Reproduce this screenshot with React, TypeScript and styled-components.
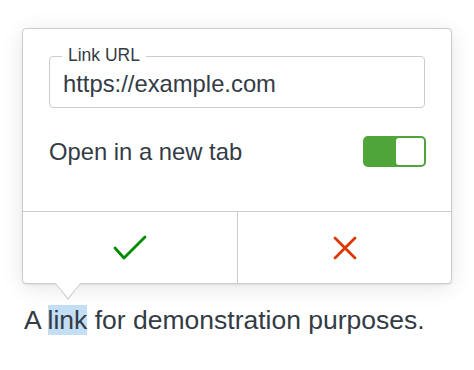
import styled, { createGlobalStyle } from 'styled-components'

const GlobalStyle = createGlobalStyle`
  body {
    margin: 0;
    background: #fff;
    font-family: "Liberation Sans", Arial, sans-serif;
    color: #333b45;
  }
`

const Page = styled.div`
  padding: 28px 0 0 22px;
`

const Balloon = styled.div`
  position: relative;
  box-sizing: border-box;
  width: 430px;
  height: 256px;
  display: flex;
  flex-direction: column;
  background: #fff;
  border: 1px solid #c9ccd1;
  border-radius: 4px;
  box-shadow: 0 1px 2px rgba(0, 0, 0, 0.08), 0 4px 22px rgba(0, 0, 0, 0.1);

  /* arrow pointing down to the link */
  &::before,
  &::after {
    content: '';
    position: absolute;
    left: 32px;
    border-style: solid;
    border-color: transparent;
  }
  &::before {
    bottom: -17px;
    border-width: 17px 13px 0 13px;
    border-top-color: #c9ccd1;
  }
  &::after {
    bottom: -15px;
    border-width: 16px 13px 0 13px;
    border-top-color: #fff;
  }
`

const Form = styled.div`
  padding: 27px 26px 0;
  flex: 1;
`

const Field = styled.fieldset`
  position: relative;
  box-sizing: border-box;
  margin: 0;
  height: 52px;
  border: 1px solid #c9ccd1;
  border-radius: 4px;
  padding: 0 13px;
  display: flex;
  align-items: center;
`

const FieldLabel = styled.label`
  position: absolute;
  top: -12px;
  left: 12px;
  padding: 0 6px;
  background: #fff;
  font-size: 17.5px;
  line-height: 20px;
  color: #333b45;
`

const UrlValue = styled.div`
  padding-top: 3px;
  font-size: 23.8px;
  color: #333b45;
`

const SwitchRow = styled.div`
  margin-top: 28px;
  height: 31px;
  display: flex;
  align-items: center;
  justify-content: space-between;
`

const SwitchLabel = styled.span`
  font-size: 23.8px;
  color: #333b45;
`

const Switch = styled.div<{ on: boolean }>`
  box-sizing: border-box;
  width: 63px;
  height: 31px;
  margin-right: -1px;
  padding: 2px;
  border-radius: 5px;
  background: ${p => (p.on ? '#4fa43a' : '#c4c4c4')};
  display: flex;
  justify-content: ${p => (p.on ? 'flex-end' : 'flex-start')};
`

const Thumb = styled.span`
  width: 28px;
  height: 27px;
  border-radius: 3px;
  background: #fff;
`

const Actions = styled.div`
  display: grid;
  grid-template-columns: 1fr 1fr;
  height: 71px;
  border-top: 1px solid #c9ccd1;
`

const ActionButton = styled.button<{ divided?: boolean }>`
  border: none;
  border-left: ${p => (p.divided ? '1px solid #c9ccd1' : 'none')};
  background: transparent;
  padding: 0;
  display: flex;
  align-items: center;
  justify-content: center;
  cursor: pointer;
`

const Paragraph = styled.p`
  margin: 21px 0 0 2px;
  font-size: 26.5px;
  line-height: 30px;
  color: #333b45;
`

const Mark = styled.span`
  background: #c3def5;
`

function CheckIcon() {
  return (
    <svg width="34" height="26" viewBox="0 0 34 26">
      <polyline
        points="2,13 11,23 32,2"
        fill="none"
        stroke="#008a00"
        strokeWidth="2.8"
        strokeLinecap="round"
        strokeLinejoin="round"
      />
    </svg>
  )
}

function CancelIcon() {
  return (
    <svg width="26" height="26" viewBox="0 0 26 26">
      <path
        d="M3 3 L23 23 M23 3 L3 23"
        fill="none"
        stroke="#db3700"
        strokeWidth="2.8"
        strokeLinecap="round"
      />
    </svg>
  )
}

export default function App() {
  return (
    <>
      <GlobalStyle />
      <Page>
        <Balloon>
          <Form>
            <Field>
              <FieldLabel>Link URL</FieldLabel>
              <UrlValue>https://example.com</UrlValue>
            </Field>
            <SwitchRow>
              <SwitchLabel>Open in a new tab</SwitchLabel>
              <Switch on={true}>
                <Thumb />
              </Switch>
            </SwitchRow>
          </Form>
          <Actions>
            <ActionButton aria-label="Save">
              <CheckIcon />
            </ActionButton>
            <ActionButton divided aria-label="Cancel">
              <CancelIcon />
            </ActionButton>
          </Actions>
        </Balloon>
        <Paragraph>
          A <Mark>link</Mark> for demonstration purposes.
        </Paragraph>
      </Page>
    </>
  )
}
